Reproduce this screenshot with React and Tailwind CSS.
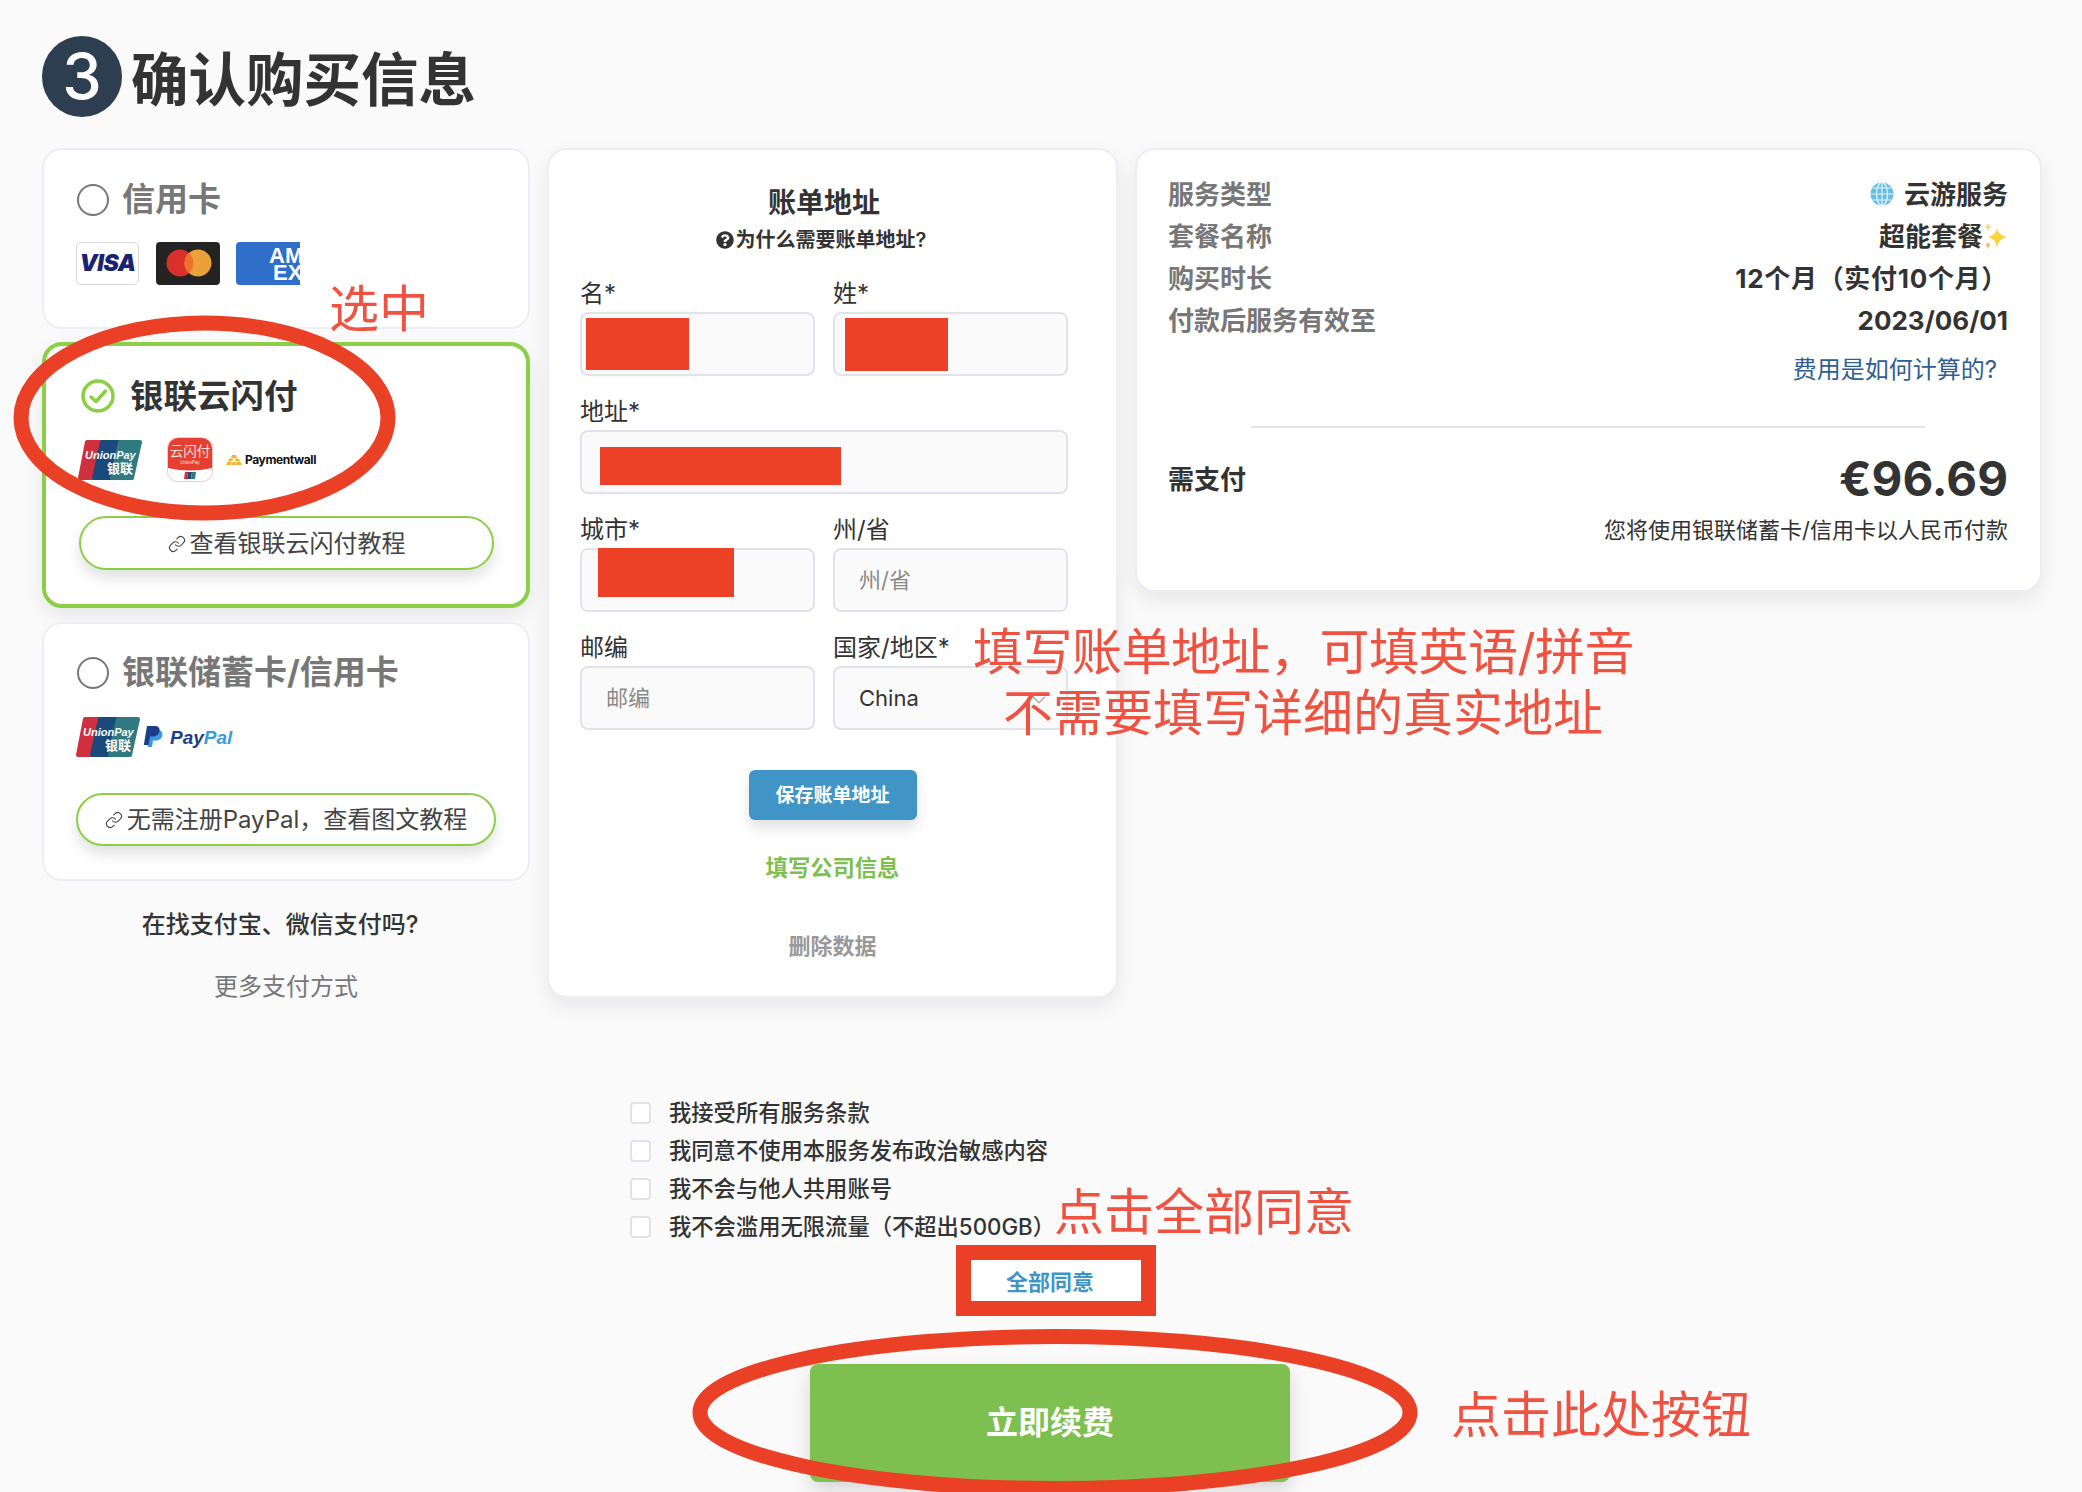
import React from "react";
import { Link as LinkIcon, ChevronDown } from "lucide-react";
import { FaQuestionCircle } from "react-icons/fa";

const RED = "#ea4126";

const Visa = () => (
  <div className="w-[63px] h-[43px] flex items-center justify-center bg-white border border-[#d8d8d8] rounded-[5px]">
    <span className="font-['Inter',sans-serif] italic font-black text-[23px] leading-none tracking-[-0.5px] text-[#1a2272]">
      VISA
    </span>
  </div>
);

const Master = () => (
  <svg width="64" height="43" viewBox="0 0 64 43" className="ml-[17px]">
    <rect width="64" height="43" rx="4" fill="#232323" />
    <circle cx="24" cy="21" r="13.5" fill="#d9302a" />
    <circle cx="42" cy="21" r="13.5" fill="#eba13b" />
    <path d="M33 11a13.5 13.5 0 0 1 0 20a13.5 13.5 0 0 1 0-20z" fill="#f0702d" />
  </svg>
);

const Amex = () => (
  <svg width="64" height="43" viewBox="0 0 64 43" className="ml-[16px]">
    <path d="M4 0H64V43H4a4 4 0 0 1-4-4V4a4 4 0 0 1 4-4z" fill="#2f6fca" />
    <text x="33" y="21" fontFamily="Liberation Sans" fontWeight="700" fontSize="22" fill="#fff">AM</text>
    <text x="37" y="38" fontFamily="Liberation Sans" fontWeight="700" fontSize="22" fill="#fff">EX</text>
  </svg>
);

const UnionPay = ({ className }) => (
  <svg width="64" height="40" viewBox="0 0 64 40" className={className}>
    <g strokeLinejoin="round" strokeWidth="4">
      <path d="M9 2H24L16 38H2z" fill="#d0303e" stroke="#d0303e" />
      <path d="M24 2H42L34 38H16z" fill="#1a4a7c" stroke="#1a4a7c" />
      <path d="M42 2H62L54 38H34z" fill="#2f7a80" stroke="#2f7a80" />
    </g>
    <text x="7" y="19" fontFamily="Liberation Sans" fontStyle="italic" fontWeight="700" fontSize="11" fill="#fff">UnionPay</text>
    <text x="29" y="33" fontFamily="Noto Sans CJK SC" fontWeight="700" fontSize="13" fill="#fff">银联</text>
  </svg>
);

const YunShanFu = () => (
  <svg width="46" height="45" viewBox="0 0 46 45" className="ml-[25px]">
    <rect x="0.5" y="0.5" width="45" height="44" rx="10" fill="#fff" stroke="#f5c9c3" />
    <path d="M1 11a10 10 0 0 1 10-10h24a10 10 0 0 1 10 10v20q-22 5-44 0z" fill="#e43f31" />
    <text x="23" y="19" textAnchor="middle" fontFamily="Noto Sans CJK SC" fontSize="13.5" fill="#fbe3df">云闪付</text>
    <text x="23" y="26.500" textAnchor="middle" fontFamily="Liberation Sans" fontSize="4.5" fill="#fbe3df">UnionPay</text>
    <path d="M18 35h3l-1 7h-3z" fill="#d0303e" />
    <path d="M21 35h4l-1 7h-4z" fill="#1a4a7c" />
    <path d="M25 35h4l-1 7h-4z" fill="#2f7a80" />
  </svg>
);

const PaymentWall = () => (
  <div className="flex items-center ml-[13px]">
    <svg width="16" height="10" viewBox="0 0 16 10">
      <path d="M6 0h4l1 3H5zM3 3.6h4l-.5 2.7H2zM9 3.6h4l1 2.7H9.5zM1.4 7h4.4L5.4 10H0zM6.4 7h3.2l.4 3H6zM10.2 7h4.4L16 10h-5.4z" fill="#f3b52c" />
    </svg>
    <span className="ml-[3px] text-[12px] leading-none font-bold tracking-[-0.4px] text-[#111] font-['Inter',sans-serif]">
      Paymentwall
    </span>
  </div>
);

const PayPal = () => (
  <div className="flex items-center ml-[3px] mt-[1px]">
    <svg width="20" height="23" viewBox="0 0 20 23">
      <path d="M7 4h7c4 0 6 2 5.400 5-.7 4-3.400 5.500-7 5.500H10l-1 6.500H4.500z" fill="#3a9ae0" />
      <path d="M4 0h7.500c4 0 5.500 2 5 5-.7 4-3.400 5.500-7 5.500H7L5.500 19H0.800z" fill="#1b3c87" />
    </svg>
    <span className="ml-[7px] font-['Liberation_Sans',sans-serif] italic font-bold text-[19px] leading-none">
      <span className="text-[#1b3c87]">Pay</span>
      <span className="text-[#3a9ae0]">Pal</span>
    </span>
  </div>
);

const Radio = () => <span className="w-[32px] h-[32px] rounded-full border-2 border-[#777] bg-white" />;

const CheckMark = () => (
  <svg width="34" height="34" viewBox="0 0 34 34">
    <circle cx="17" cy="17" r="15" fill="none" stroke="#8ccf47" strokeWidth="3.500" />
    <path d="M10 18l5 4.500L24.500 12" fill="none" stroke="#8ccf47" strokeWidth="3.500" strokeLinecap="round" strokeLinejoin="round" />
  </svg>
);

const TutorialButton = ({ className, children }) => (
  <div
    className={`flex items-center justify-center gap-[4px] rounded-full border-2 border-[#8ccf47] bg-white text-[24px] text-[#444] shadow-[0_8px_14px_rgba(0,0,0,0.12)] ${className}`}
  >
    <LinkIcon size={18} strokeWidth={1.5} color="#444" />
    {children}
  </div>
);

const Field = ({ label, children }) => (
  <div>
    <div className="h-[30px] mb-[4px] pt-[1px] text-[24px] leading-[30px] text-[#333]">{label}</div>
    {children}
  </div>
);

const Input = ({ placeholder, value, children }) => (
  <div className="relative h-[64px] flex items-center pl-[24px] bg-[#fafafa] border-2 border-[#e2e2ea] rounded-[8px] text-[22px]">
    {value && <span className="text-[#333]">{value}</span>}
    {placeholder && <span className="text-[#8a8a8a]">{placeholder}</span>}
    {children}
  </div>
);

const Redact = ({ className }) => <div className={`absolute bg-[#ec4126] ${className}`} />;

const Row = ({ label, children }) => (
  <div className="flex justify-between items-center h-[42px] text-[26px]">
    <span className="font-semibold text-[#777]">{label}</span>
    <span className="flex items-center font-bold text-[#333]">{children}</span>
  </div>
);

const Globe = () => (
  <svg width="24" height="24" viewBox="0 0 24 24" className="mr-[10px]">
    <circle cx="12" cy="12" r="11.500" fill="#68bde3" />
    <g fill="none" stroke="#e8f5fb" strokeWidth="1.200">
      <ellipse cx="12" cy="12" rx="5.500" ry="11.500" />
      <path d="M12 .5v23M.5 12h23M2.500 6h19M2.500 18h19" />
    </g>
  </svg>
);

const Sparkles = () => (
  <svg width="25" height="28" viewBox="0 0 25 28">
    <path d="M14 6q1 7 10 9q-9 2-10 11q-1-9-9-11q8-2 9-9z" fill="#fbd33f" />
    <path d="M5 1q.5 3 3.500 4q-3 1-3.500 4q-.5-3-3.500-4q3-1 3.500-4z" fill="#fbd98a" />
    <path d="M5 20q.4 2 2.500 3q-2 1-2.500 4q-.4-3-2.500-4q2-1 2.500-3z" fill="#f9b45c" />
  </svg>
);

const Agree = ({ children }) => (
  <div className="flex items-center h-[38px] text-[22.3px] font-medium text-[#333]">
    <span className="w-[21px] h-[22px] mr-[18px] rounded-[4px] border-2 border-[#e2e2ea] bg-white" />
    {children}
  </div>
);

const Note = ({ className, children }) => (
  <div className={`absolute whitespace-nowrap text-[50px] leading-[61px] text-[#ef5240] ${className}`}>{children}</div>
);

export default function App() {
  return (
    <div className="relative w-[2082px] h-[1492px] overflow-hidden bg-[#fafafa] pl-[42px] pt-[36px] font-['Inter','Noto_Sans_CJK_SC',sans-serif]">
      {/* heading */}
      <div className="flex items-center gap-[9px] h-[81px]">
        <span className="w-[80px] h-[81px] flex items-center justify-center rounded-full bg-[#2c3e50] text-white text-[63px] font-medium leading-none">
          3
        </span>
        <h1 className="mt-[8px] text-[57.500px] font-bold text-[#333]">确认购买信息</h1>
      </div>

      <div className="flex items-start mt-[31px]">
        {/* payment methods */}
        <div className="w-[488px] flex flex-col">
          <div className="h-[181px] rounded-[20px] border-2 border-[#ededf5] bg-white pl-[33px] pt-[30px]">
            <div className="flex items-center gap-[13px] h-[40px] text-[33px] font-bold text-[#777]">
              <Radio />
              信用卡
            </div>
            <div className="flex mt-[22px] -ml-px">
              <Visa />
              <Master />
              <Amex />
            </div>
          </div>

          <div className="h-[266px] mt-[13px] rounded-[20px] border-4 border-[#8ccf47] bg-white pt-[30px] shadow-[0_8px_20px_rgba(0,0,0,0.08)]">
            <div className="flex items-center gap-[15px] h-[40px] pl-[35px] text-[33.500px] font-bold text-[#333]">
              <CheckMark />
              银联云闪付
            </div>
            <div className="flex items-center h-[45px] mt-[21px] pl-[32px]">
              <UnionPay />
              <YunShanFu />
              <PaymentWall />
            </div>
            <TutorialButton className="w-[415px] h-[54px] mt-[34px] ml-[33px] pt-[2px]">查看银联云闪付教程</TutorialButton>
          </div>

          <div className="h-[259px] mt-[14px] rounded-[20px] border-2 border-[#ededf5] bg-white pt-[29px] pl-[33px]">
            <div className="flex items-center gap-[13px] h-[40px] text-[33px] font-bold text-[#777]">
              <Radio />
              银联储蓄卡/信用卡
            </div>
            <div className="flex items-center mt-[24px] -ml-px">
              <UnionPay />
              <PayPal />
            </div>
            <TutorialButton className="w-[420px] h-[53px] mt-[36px] -ml-px">无需注册PayPal，查看图文教程</TutorialButton>
          </div>

          <div className="mt-[26px] pr-[12px] h-[36px] text-center text-[24px] leading-[36px] font-medium text-[#333]">
            在找支付宝、微信支付吗?
          </div>
          <div className="mt-[26px] h-[36px] text-center text-[24px] leading-[36px] text-[#777]">更多支付方式</div>
        </div>

        {/* billing address */}
        <div className="w-[571px] h-[850px] ml-[17px] rounded-[20px] border-2 border-[#ededf5] bg-white pt-[33px] shadow-[0_8px_20px_rgba(0,0,0,0.08)]">
          <div className="w-[488px] ml-[31px]">
            <div className="h-[40px] text-center text-[28px] leading-[40px] font-bold text-[#333]">账单地址</div>
            <div className="flex items-center justify-center gap-[2px] h-[28px] mt-[3px] pr-[6px] text-[20px] font-semibold text-[#333]">
              <FaQuestionCircle size={18} />
              为什么需要账单地址?
            </div>
            <div className="grid grid-cols-2 gap-x-[18px] gap-y-[20px] mt-[24px]">
              <Field label="名*">
                <Input>
                  <Redact className="left-[4px] top-[4px] w-[103px] h-[52px]" />
                </Input>
              </Field>
              <Field label="姓*">
                <Input>
                  <Redact className="left-[10px] top-[4px] w-[103px] h-[53px]" />
                </Input>
              </Field>
              <div className="col-span-2">
                <Field label="地址*">
                  <Input>
                    <Redact className="left-[18px] top-[15px] w-[241px] h-[38px]" />
                  </Input>
                </Field>
              </div>
              <Field label="城市*">
                <Input>
                  <Redact className="left-[16px] -top-[2px] w-[136px] h-[49px]" />
                </Input>
              </Field>
              <Field label="州/省">
                <Input placeholder="州/省" />
              </Field>
              <Field label="邮编">
                <Input placeholder="邮编" />
              </Field>
              <Field label="国家/地区*">
                <Input value="China">
                  <ChevronDown size={22} strokeWidth={1.5} color="#aaa" className="absolute right-[16px] top-[21px]" />
                </Input>
              </Field>
            </div>
          </div>
          <div className="flex flex-col items-center mt-[40px]">
            <div className="w-[168px] h-[50px] flex items-center justify-center pt-[2px] rounded-[6px] bg-[#4195c6] text-[19px] font-bold text-white shadow-[0_8px_14px_rgba(0,0,0,0.12)]">
              保存账单地址
            </div>
            <div className="h-[30px] mt-[33px] text-[22.300px] leading-[30px] font-bold text-[#7dc050]">填写公司信息</div>
            <div className="h-[30px] mt-[48px] text-[22px] leading-[30px] font-bold text-[#999]">删除数据</div>
          </div>
        </div>

        {/* order summary */}
        <div className="w-[907px] h-[444px] ml-[17px] rounded-[20px] border-2 border-[#ededf5] bg-white pl-[31px] pr-[32px] pt-[23px] shadow-[0_8px_20px_rgba(0,0,0,0.08)]">
          <Row label="服务类型">
            <Globe />
            云游服务
          </Row>
          <Row label="套餐名称">
            超能套餐
            <Sparkles />
          </Row>
          <Row label="购买时长">
            <span className="tracking-[0.7px]">12个月（实付10个月）</span>
          </Row>
          <Row label="付款后服务有效至">2023/06/01</Row>
          <div className="h-[34px] mt-[12px] mr-[11px] text-right text-[24px] leading-[34px] text-[#2f5d95]">费用是如何计算的?</div>
          <div className="h-[2px] mt-[39px] mx-[83px] bg-[#e2e2ea]" />
          <div className="flex justify-between items-center h-[60px] mt-[21px]">
            <span className="text-[26px] font-bold text-[#333]">需支付</span>
            <span className="text-[47.500px] font-bold text-[#333]">€96.69</span>
          </div>
          <div className="h-[30px] mt-[6px] text-right text-[22px] leading-[30px] text-[#333]">
            您将使用银联储蓄卡/信用卡以人民币付款
          </div>
        </div>
      </div>

      {/* terms and submit */}
      <div className="w-[840px] ml-[588px] mt-[89px] flex flex-col">
        <Agree>我接受所有服务条款</Agree>
        <Agree>我同意不使用本服务发布政治敏感内容</Agree>
        <Agree>我不会与他人共用账号</Agree>
        <Agree>我不会滥用无限流量（不超出500GB）</Agree>
        <div className="self-center w-[188px] h-[50px] mt-[10px] flex items-center justify-center pt-[2px] bg-white text-[22px] font-bold text-[#4195c6]">
          全部同意
        </div>
        <div className="self-center w-[480px] h-[118px] mt-[58px] flex items-center justify-center rounded-[8px] bg-[#7dc050] text-[32px] font-bold text-white shadow-[0_8px_20px_rgba(0,0,0,0.15)]">
          立即续费
        </div>
      </div>

      {/* annotations drawn over the page */}
      <svg className="absolute left-0 top-0 pointer-events-none" width="2082" height="1492" viewBox="0 0 2082 1492" fill="none">
        <ellipse cx="204.500" cy="418" rx="183.500" ry="95" stroke={RED} strokeWidth="15" />
        <ellipse cx="1055" cy="1412.500" rx="355" ry="76" stroke={RED} strokeWidth="15" />
      </svg>
      <div className="absolute left-[956px] top-[1245px] w-[200px] h-[71px] border-[15px] border-[#ea4126]" />
      <Note className="left-[329px] top-[279px]">选中</Note>
      <Note className="left-[973px] top-[622px] w-[660px] text-center">
        <span className="tracking-[-0.5px]">填写账单地址，可填英语/拼音</span>
        <br />
        不需要填写详细的真实地址
      </Note>
      <Note className="left-[1054px] top-[1182px]">点击全部同意</Note>
      <Note className="left-[1451px] top-[1385px]">点击此处按钮</Note>
    </div>
  );
}
